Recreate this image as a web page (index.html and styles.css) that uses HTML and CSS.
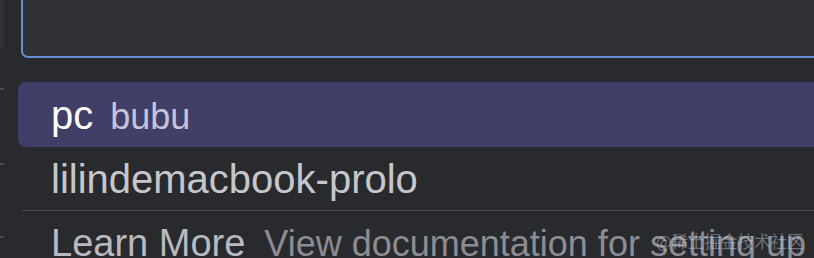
FILE: index.html
```html
<!DOCTYPE html>
<html>
<head>
<meta charset="utf-8">
<link rel="stylesheet" href="styles.css">
</head>
<body>
<div class="page">
  <div class="edge">
    <div class="edge-block"></div>
    <div class="tick tick-1"></div>
    <div class="tick tick-2"></div>
    <div class="tick tick-3"></div>
  </div>
  <div class="main">
    <div class="input"></div>
    <div class="list">
      <div class="row row-active">
        <span class="label label-active">pc</span><span class="desc desc-active">bubu</span>
      </div>
      <div class="row">
        <span class="label">lilindemacbook-prolo</span>
      </div>
      <div class="separator"></div>
      <div class="row">
        <span class="label label-learn">Learn More</span><span class="desc">View documentation for setting up</span>
      </div>
    </div>
  </div>
</div>
<div class="watermark">@稀土掘金技术社区</div>
</body>
</html>
```
FILE: styles.css
```css
html, body {
  margin: 0;
  padding: 0;
  width: 814px;
  height: 258px;
  overflow: hidden;
  background: #292a2e;
}
body {
  position: relative;
  font-family: "Liberation Sans", Arial, sans-serif;
}
.page {
  display: flex;
  width: 1000px;
}
.edge {
  width: 4px;
  display: flex;
  flex-direction: column;
}
.edge-block {
  height: 48px;
  background: #313237;
}
.tick {
  height: 2px;
  background: #4a4b50;
}
.tick-1 { margin-top: 40px; }
.tick-2 { margin-top: 73px; }
.tick-3 { margin-top: 71px; }
.main {
  flex: 1;
  padding-left: 14px;
}
.input {
  margin-left: 3px;
  margin-top: -12px;
  height: 66px;
  border: 2px solid #6890d6;
  border-radius: 7px;
  background: #2f3137;
}
.list {
  margin-top: 24px;
}
.row {
  height: 64px;
  line-height: 64px;
  padding-left: 33px;
  white-space: nowrap;
  color: #c6c7cc;
}
.row-active {
  height: 65px;
  line-height: 67px;
  background: #403f67;
  border-radius: 8px 0 0 8px;
}
.label {
  font-size: 40px;
}
.label-active {
  color: #ffffff;
}
.label-learn {
  color: #b9babf;
  font-size: 38px;
}
.desc {
  font-size: 36px;
  margin-left: 19px;
  color: #8c8d92;
}
.desc-active {
  color: #c5c3dc;
  margin-left: 17px;
}
.separator {
  margin-left: 4px;
  height: 1px;
  background: #4a4b50;
  margin-top: -1px;
}
.watermark {
  position: absolute;
  left: 656px;
  top: 229px;
  font-family: "Noto Sans CJK SC", sans-serif;
  font-size: 16.5px;
  color: rgba(230, 230, 235, 0.38);
}
```
